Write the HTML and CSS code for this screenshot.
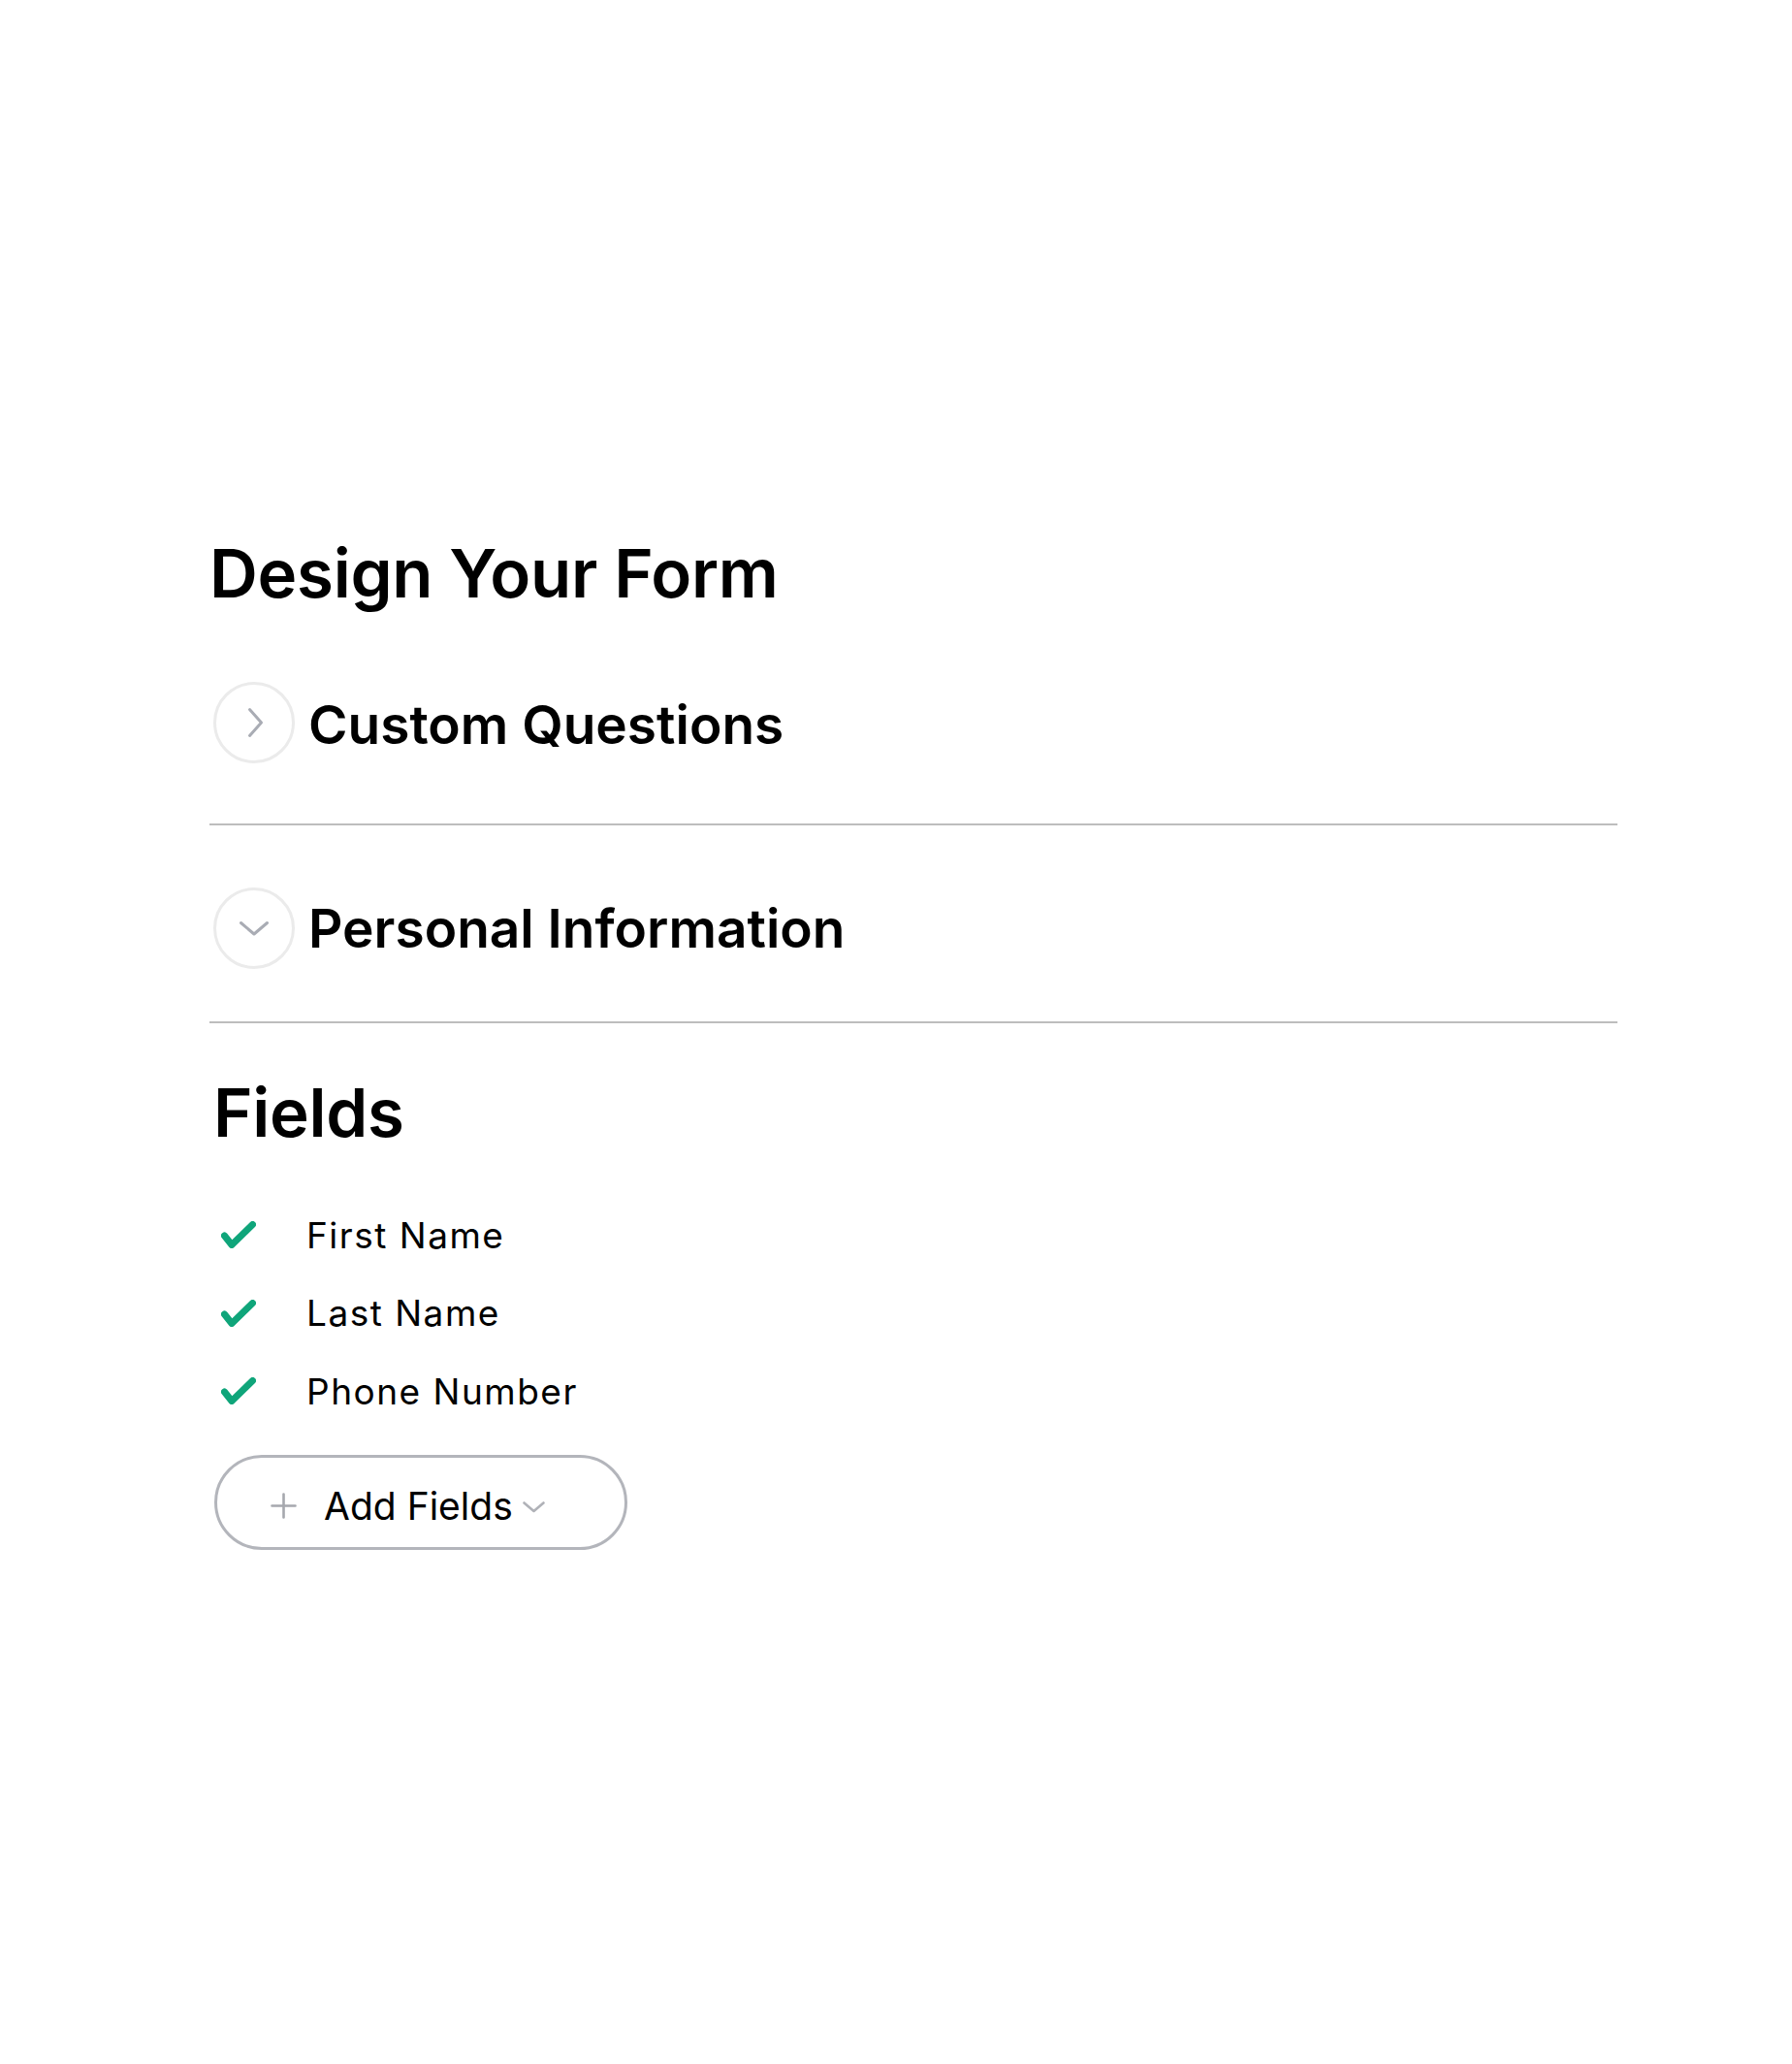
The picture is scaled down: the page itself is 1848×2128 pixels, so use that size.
FILE: index.html
```html
<!DOCTYPE html>
<html lang="en">
<head>
<meta charset="utf-8">
<title>Design Your Form</title>
<link rel="stylesheet" href="styles.css">
</head>
<body>
<main class="page">
  <h1 class="title">Design Your Form</h1>

  <section class="acc acc-first">
    <div class="acc-head">
      <svg class="acc-icon" width="84" height="84" viewBox="0 0 84 84" aria-hidden="true">
        <circle cx="42" cy="42" r="40.5" fill="none" stroke="#ebebeb" stroke-width="3"/>
        <path d="M37.5 28.5 L49.5 42 L37.5 55.5" fill="none" stroke="#a9acb4" stroke-width="3" stroke-linecap="round" stroke-linejoin="round"/>
      </svg>
      <h2 class="acc-title acc-title-low">Custom Questions</h2>
    </div>
  </section>

  <section class="acc acc-second">
    <div class="acc-head">
      <svg class="acc-icon" width="84" height="84" viewBox="0 0 84 84" aria-hidden="true">
        <circle cx="42" cy="42" r="40.5" fill="none" stroke="#ebebeb" stroke-width="3"/>
        <path d="M28.5 36.5 L42 48 L55.5 36.5" fill="none" stroke="#a9acb4" stroke-width="3" stroke-linecap="round" stroke-linejoin="round"/>
      </svg>
      <h2 class="acc-title">Personal Information</h2>
    </div>
  </section>

  <section class="fields">
    <h2 class="fields-title">Fields</h2>
    <ul class="field-list">
      <li class="field">
        <svg class="check" width="36" height="28" viewBox="0 0 36 28" aria-hidden="true"><path d="M3.5 15 L11 24.5 L32.5 3.5" fill="none" stroke="#0fa57a" stroke-width="7" stroke-linecap="round" stroke-linejoin="round"/></svg>
        <span class="field-name">First Name</span>
      </li>
      <li class="field">
        <svg class="check" width="36" height="28" viewBox="0 0 36 28" aria-hidden="true"><path d="M3.5 15 L11 24.5 L32.5 3.5" fill="none" stroke="#0fa57a" stroke-width="7" stroke-linecap="round" stroke-linejoin="round"/></svg>
        <span class="field-name">Last Name</span>
      </li>
      <li class="field">
        <svg class="check" width="36" height="28" viewBox="0 0 36 28" aria-hidden="true"><path d="M3.5 15 L11 24.5 L32.5 3.5" fill="none" stroke="#0fa57a" stroke-width="7" stroke-linecap="round" stroke-linejoin="round"/></svg>
        <span class="field-name">Phone Number</span>
      </li>
    </ul>
    <button class="add-btn" type="button">
      <svg class="plus" width="27" height="27" viewBox="0 0 27 27" aria-hidden="true"><path d="M13.5 1.5 V25.5 M1.5 13.5 H25.5" fill="none" stroke="#a6a8ae" stroke-width="2.6" stroke-linecap="round"/></svg>
      <span class="add-label">Add Fields</span>
      <svg class="caret" width="23" height="12" viewBox="0 0 23 12" aria-hidden="true"><path d="M1.5 1.5 L11.5 10 L21.5 1.5" fill="none" stroke="#b0b2b8" stroke-width="2.6" stroke-linecap="round" stroke-linejoin="round"/></svg>
    </button>
  </section>
</main>
</body>
</html>
```

FILE: styles.css
```css
* { box-sizing: border-box; }

html, body {
  margin: 0;
  background: #ffffff;
}

body {
  font-family: Inter, "Noto Sans", sans-serif;
  color: #000000;
}

.page {
  width: 1668px;
  padding: 557px 0 0 216px;
}

.title {
  margin: 0;
  font-size: 69px;
  line-height: 69px;
  font-weight: 600;
  letter-spacing: -0.3px;
}

.acc {
  border-bottom: 2px solid #bdbdbd;
}

.acc-first {
  padding: 77px 0 62px;
}

.acc-second {
  padding: 64px 0 54px;
}

.acc-head {
  display: flex;
  align-items: center;
  gap: 14px;
  padding-left: 4px;
}

.acc-icon {
  display: block;
  flex: none;
}

.acc-title {
  margin: 0;
  font-size: 55px;
  line-height: 55px;
  font-weight: 600;
}

.acc-title-low {
  padding-top: 4px;
}

.fields {
  padding: 58px 0 0 4px;
}

.fields-title {
  margin: 0;
  font-size: 69px;
  line-height: 69px;
  font-weight: 600;
  letter-spacing: -0.3px;
}

.field-list {
  list-style: none;
  margin: 51px 0 0;
  padding: 0;
}

.field {
  display: flex;
  align-items: center;
  height: 80.5px;
}

.check {
  display: block;
  flex: none;
  margin: 0 52px 0 8px;
}

.field-name {
  font-size: 37px;
  line-height: 1;
  font-weight: 400;
  letter-spacing: 1.5px;
}

.add-btn {
  display: flex;
  align-items: center;
  width: 426px;
  height: 98px;
  margin-top: 25px;
  margin-left: 1px;
  padding: 8px 0 0 55px;
  border: 3px solid #b3b5bb;
  border-radius: 49px;
  background: #ffffff;
  font-family: inherit;
  color: #000000;
  cursor: pointer;
}

.plus {
  display: block;
  flex: none;
}

.add-label {
  margin-left: 28px;
  font-size: 39px;
  line-height: 1;
  font-weight: 400;
}

.caret {
  display: block;
  flex: none;
  margin: 3px 0 0 10px;
}
```
